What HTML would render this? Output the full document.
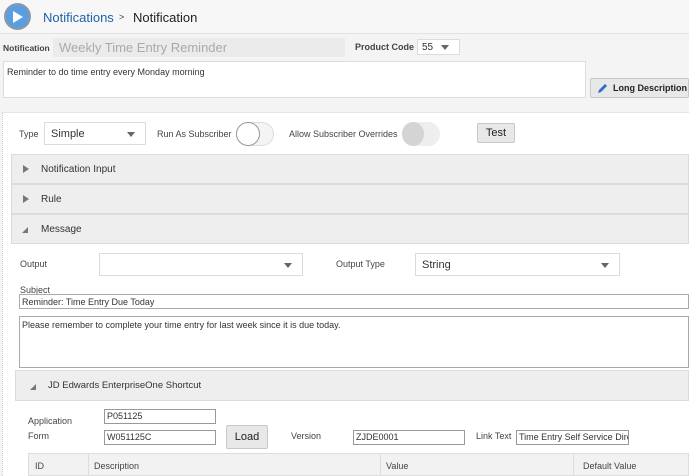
<!DOCTYPE html>
<html><head><meta charset="utf-8"><style>
*{box-sizing:border-box;margin:0;padding:0}
body{width:689px;height:476px;overflow:hidden;background:#f4f4f4;font-family:"Liberation Sans",Arial,sans-serif;color:#333;position:relative}
.a{position:absolute}
.lbl{font-size:9px;color:#444}
.inp{position:absolute;background:#fff;border:1px solid #c9c9c9}
.sel{position:absolute;background:#fff;border:1px solid #dcdcdc;font-size:11px;padding-left:6px;display:flex;align-items:center}
.sel:after{content:"";position:absolute;right:10px;top:50%;margin-top:-2px;border-left:4px solid transparent;border-right:4px solid transparent;border-top:5px solid #666}
.acc{position:absolute;left:11px;right:0;background:#eeeeee;border:1px solid #dcdcdc;font-size:10px;color:#333;display:flex;align-items:center;padding-left:29px}
.tri{position:absolute;left:11px;top:50%;margin-top:-4px;border-top:4px solid transparent;border-bottom:4px solid transparent;border-left:6px solid #777}
.tri2{position:absolute;left:10px;top:50%;margin-top:-2px;border-left:6px solid transparent;border-bottom:6px solid #777}
.btn{position:absolute;background:#e8e8e8;border:1px solid #c8c8c8;border-radius:2px;display:flex;align-items:center;justify-content:center;font-size:11px;color:#222}
</style></head><body>
<div class="a" style="left:0;top:0;width:689px;height:34px;background:#f7f7f7;border-bottom:1px solid #e2e2e2"></div>
<div class="a" style="left:4px;top:3px;width:27px;height:27px;border-radius:50%;background:#5b9ee0;border:2px solid #8a98a8"></div>
<svg class="a" style="left:11px;top:10px" width="14" height="14"><path d="M2 1 L12 7 L2 13 Z" fill="#fff"/></svg>
<div class="a" style="left:43px;top:10px;font-size:13px;color:#1e64a8">Notifications</div>
<div class="a" style="left:119px;top:12px;font-size:9px;color:#444">&gt;</div>
<div class="a" style="left:133px;top:10px;font-size:13px;color:#222">Notification</div>

<div class="a lbl" style="left:3px;top:43px;font-weight:bold;font-size:8.5px">Notification</div>
<div class="a" style="left:53px;top:38px;width:292px;height:19px;background:#ebebeb;font-size:13px;color:#aaa;padding:2px 6px">Weekly Time Entry Reminder</div>
<div class="a lbl" style="left:355px;top:42px;font-weight:bold">Product Code</div>
<div class="sel" style="left:417px;top:39px;width:43px;height:16px;font-size:10px;padding-left:4px">55</div>
<div class="inp" style="left:3px;top:61px;width:583px;height:37px;border-color:#ddd;font-size:9px;color:#333;padding:5px 3px">Reminder to do time entry every Monday morning</div>
<div class="btn" style="left:590px;top:78px;width:99px;height:20px;font-size:9px;font-weight:bold;justify-content:flex-start;padding-left:6px"><svg width="12" height="12" style="margin-right:4px"><path d="M1 11 L2 8 L8 2 L10 4 L4 10 Z" fill="#2a6fc0"/></svg>Long Description</div>

<div class="a" style="left:2px;top:112px;width:687px;height:364px;background:#fff;border-left:1px dotted #ccc;border-top:1px solid #e5e5e5"></div>
<div class="a lbl" style="left:19px;top:129px">Type</div>
<div class="sel" style="left:44px;top:122px;width:102px;height:23px">Simple</div>
<div class="a lbl" style="left:157px;top:129px">Run As Subscriber</div>
<div class="a" style="left:236px;top:122px;width:38px;height:24px;border-radius:12px;background:#f4f4f4;border:1px solid #ddd"></div>
<div class="a" style="left:236px;top:122px;width:24px;height:24px;border-radius:50%;background:#fff;border:1px solid #999"></div>
<div class="a lbl" style="left:289px;top:129px">Allow Subscriber Overrides</div>
<div class="a" style="left:402px;top:122px;width:38px;height:24px;border-radius:12px;background:#eee"></div>
<div class="a" style="left:402px;top:122px;width:22px;height:24px;border-radius:50%;background:#d4d4d4"></div>
<div class="btn" style="left:477px;top:123px;width:38px;height:20px">Test</div>

<div class="acc" style="top:154px;height:30px"><span class="tri"></span>Notification Input</div>
<div class="acc" style="top:184px;height:30px"><span class="tri"></span>Rule</div>
<div class="acc" style="top:214px;height:30px"><span class="tri2"></span>Message</div>

<div class="a lbl" style="left:20px;top:259px">Output</div>
<div class="sel" style="left:99px;top:253px;width:204px;height:23px"></div>
<div class="a lbl" style="left:336px;top:259px">Output Type</div>
<div class="sel" style="left:415px;top:253px;width:205px;height:23px">String</div>
<div class="a lbl" style="left:20px;top:285px">Subject</div>
<div class="inp" style="left:19px;top:294px;width:670px;height:15px;font-size:9px;padding:2px 2px;border-color:#aaa">Reminder: Time Entry Due Today</div>
<div class="inp" style="left:19px;top:316px;width:670px;height:52px;font-size:9px;padding:3px 2px;border-color:#aaa">Please remember to complete your time entry for last week since it is due today.</div>

<div class="acc" style="left:15px;top:370px;height:31px;font-size:9.5px;padding-left:32px"><span class="tri2" style="left:14px"></span>JD Edwards EnterpriseOne Shortcut</div>
<div class="a lbl" style="left:28px;top:416px">Application</div>
<div class="inp" style="left:104px;top:409px;width:112px;height:15px;font-size:9px;padding:1px 2px;border-color:#999">P051125</div>
<div class="a lbl" style="left:28px;top:431px">Form</div>
<div class="inp" style="left:104px;top:430px;width:112px;height:15px;font-size:9px;padding:1px 2px;border-color:#999">W051125C</div>
<div class="btn" style="left:226px;top:425px;width:42px;height:24px">Load</div>
<div class="a lbl" style="left:291px;top:431px">Version</div>
<div class="inp" style="left:353px;top:430px;width:112px;height:15px;font-size:9px;padding:1px 2px;border-color:#999">ZJDE0001</div>
<div class="a lbl" style="left:476px;top:431px">Link Text</div>
<div class="inp" style="left:516px;top:430px;width:113px;height:15px;font-size:9px;padding:1px 2px;border-color:#999;white-space:nowrap;overflow:hidden">Time Entry Self Service Dire</div>
<div class="a" style="left:28px;top:453px;width:661px;height:23px;background:#f2f2f2;border:1px solid #ddd"></div>
<div class="a" style="left:88px;top:453px;width:1px;height:23px;background:#ddd"></div>
<div class="a" style="left:380px;top:453px;width:1px;height:23px;background:#ddd"></div>
<div class="a" style="left:573px;top:453px;width:1px;height:23px;background:#ddd"></div>
<div class="a lbl" style="left:35px;top:461px">ID</div>
<div class="a lbl" style="left:94px;top:461px">Description</div>
<div class="a lbl" style="left:386px;top:461px">Value</div>
<div class="a lbl" style="left:583px;top:461px">Default Value</div>
</body></html>
